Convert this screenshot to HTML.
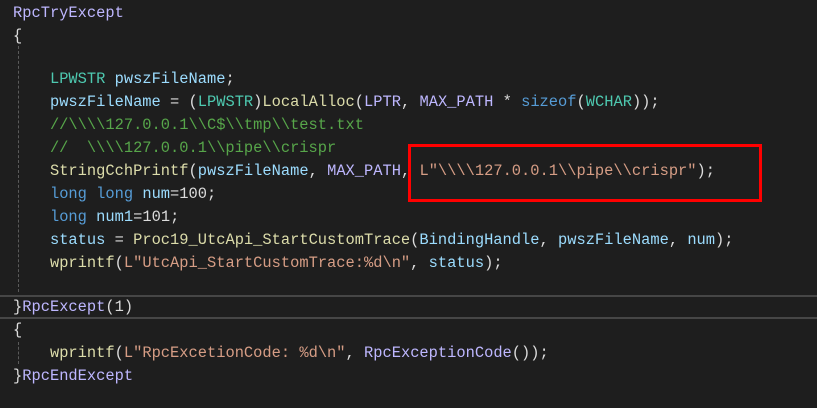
<!DOCTYPE html>
<html><head><style>
body{margin:0;width:817px;height:408px;background:#1e1e1e;overflow:hidden;position:relative;font-family:"Liberation Mono","Noto Sans CJK SC",monospace;font-size:15.4px;color:#dcdcdc}
.l{position:absolute;left:13px;white-space:pre;line-height:20px}
.m{color:#beb7ff}.t{color:#4ec9b0}.f{color:#dcdcaa}.c{color:#57a64a}.s{color:#d69d85}.v{color:#9cdcfe}.n{color:#dcdcdc}.k{color:#569cd6}
.hl{position:absolute;left:0;width:817px;height:2px;background:#464646}
.g{position:absolute;left:18px;width:0;border-left:1px dashed #5a5a5a}
</style></head><body>
<div class="hl" style="top:295px"></div>
<div class="hl" style="top:317px"></div>
<div class="g" style="top:46px;height:246px"></div>
<div class="g" style="top:342px;height:22px"></div>
<div class="l m" style="top:3px">RpcTryExcept</div>
<div class="l" style="top:26px">{</div>
<div class="l" style="top:69px">    <span class="t">LPWSTR</span> <span class="v">pwszFileName</span>;</div>
<div class="l" style="top:92px">    <span class="v">pwszFileName</span> = (<span class="t">LPWSTR</span>)<span class="f">LocalAlloc</span>(<span class="m">LPTR</span>, <span class="m">MAX_PATH</span> * <span class="k">sizeof</span>(<span class="t">WCHAR</span>));</div>
<div class="l c" style="top:115px">    //\\\\127.0.0.1\\C$\\tmp\\test.txt</div>
<div class="l c" style="top:138px">    //  \\\\127.0.0.1\\pipe\\crispr</div>
<div class="l" style="top:161px">    <span class="f">StringCchPrintf</span>(<span class="v">pwszFileName</span>, <span class="m">MAX_PATH</span>, <span class="s">L"\\\\127.0.0.1\\pipe\\crispr"</span>);</div>
<div class="l" style="top:184px">    <span class="k">long long</span> <span class="v">num</span>=<span class="n">100</span>;</div>
<div class="l" style="top:207px">    <span class="k">long</span> <span class="v">num1</span>=<span class="n">101</span>;</div>
<div class="l" style="top:230px">    <span class="v">status</span> = <span class="f">Proc19_UtcApi_StartCustomTrace</span>(<span class="v">BindingHandle</span>, <span class="v">pwszFileName</span>, <span class="v">num</span>);</div>
<div class="l" style="top:253px">    <span class="f">wprintf</span>(<span class="s">L"UtcApi_StartCustomTrace:%d\n"</span>, <span class="v">status</span>);</div>
<div class="l" style="top:297px">}<span class="m">RpcExcept</span>(<span class="n">1</span>)</div>
<div class="l" style="top:320px">{</div>
<div class="l" style="top:343px">    <span class="f">wprintf</span>(<span class="s">L"RpcExcetionCode: %d\n"</span>, <span class="m">RpcExceptionCode</span>());</div>
<div class="l" style="top:366px">}<span class="m">RpcEndExcept</span></div>
<div style="position:absolute;left:408px;top:144px;width:348px;height:52px;border:3px solid #f00"></div>
</body></html>
